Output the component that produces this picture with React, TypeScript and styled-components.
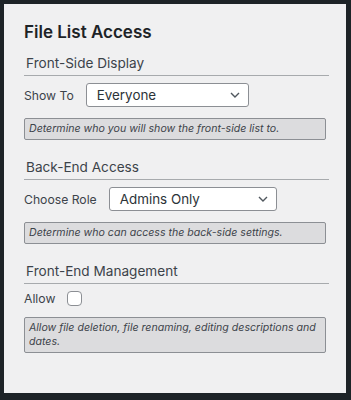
import React from "react";
import styled, { createGlobalStyle } from "styled-components";

const GlobalStyle = createGlobalStyle`
  body {
    margin: 0;
    background: #1d2327;
    font-family: Inter, "Noto Sans", Arial, sans-serif;
  }
`;

const Panel = styled.div`
  margin: 4px;
  width: 342px;
  height: 389px;
  box-sizing: border-box;
  background: #f0f0f1;
  padding: 16px 20px 0 20px;
  color: #1d2327;
`;

const Title = styled.h1`
  margin: 0 0 10px 0;
  font-size: 17px;
  font-weight: 600;
  line-height: 24px;
`;

const Section = styled.div`
  margin-bottom: 18px;
`;

const Heading = styled.h2`
  margin: 0;
  width: 303px;
  padding: 0 0 3px 2px;
  font-size: 13.6px;
  font-weight: 400;
  line-height: 18px;
  color: #3c434a;
  border-bottom: 1px solid #a7aaad;
`;

const Row = styled.div`
  display: flex;
  align-items: center;
  gap: 12px;
  margin-top: 7px;
  font-size: 12.2px;
  color: #3c434a;
`;

const Select = styled.div<{ $width: number }>`
  width: ${(p) => p.$width}px;
  height: 24px;
  box-sizing: border-box;
  background: #fff;
  border: 1px solid #8c8f94;
  border-radius: 3px;
  display: flex;
  align-items: center;
  justify-content: space-between;
  padding: 0 8px 0 10px;
  font-size: 13.4px;
  color: #2c3338;
`;

const Checkbox = styled.div`
  width: 15px;
  height: 15px;
  box-sizing: border-box;
  background: #fff;
  border: 1px solid #8c8f94;
  border-radius: 4px;
`;

const Description = styled.div`
  margin-top: 11px;
  width: 302px;
  box-sizing: border-box;
  background: #dcdcde;
  border: 1px solid #8c8f94;
  border-radius: 2px;
  padding: 3px 4px;
  font-size: 10.6px;
  line-height: 14px;
  font-style: italic;
  color: #3c434a;
`;

const Chevron = () => (
  <svg width="10" height="6" viewBox="0 0 10 6">
    <path d="M1 1l4 4 4-4" fill="none" stroke="#50575e" strokeWidth="1.4" />
  </svg>
);

export default function App() {
  return (
    <>
      <GlobalStyle />
      <Panel>
        <Title>File List Access</Title>
        <Section>
          <Heading>Front-Side Display</Heading>
          <Row>
            <span>Show To</span>
            <Select $width={163}>
              <span>Everyone</span>
              <Chevron />
            </Select>
          </Row>
          <Description>Determine who you will show the front-side list to.</Description>
        </Section>
        <Section>
          <Heading>Back-End Access</Heading>
          <Row>
            <span>Choose Role</span>
            <Select $width={168}>
              <span>Admins Only</span>
              <Chevron />
            </Select>
          </Row>
          <Description>Determine who can access the back-side settings.</Description>
        </Section>
        <Section>
          <Heading>Front-End Management</Heading>
          <Row>
            <span>Allow</span>
            <Checkbox />
          </Row>
          <Description>
            Allow file deletion, file renaming, editing descriptions and dates.
          </Description>
        </Section>
      </Panel>
    </>
  );
}
